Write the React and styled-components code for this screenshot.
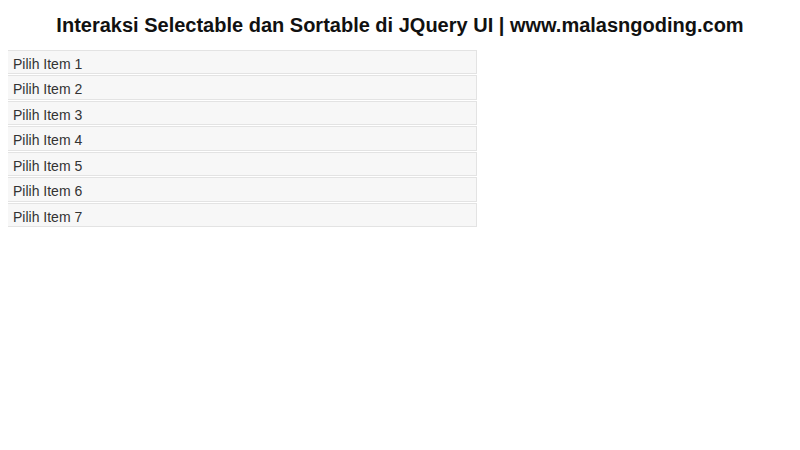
import React from "react";
import styled, { createGlobalStyle } from "styled-components";

const Global = createGlobalStyle`
  html, body { margin: 0; padding: 0; background: #fff; }
  body { margin: 8px; font-family: "Liberation Sans", Arial, sans-serif; }
`;

const Title = styled.h1`
  margin: 4.5px 0 13.5px;
  text-align: center;
  font-size: 20px;
  line-height: 24px;
  font-weight: bold;
  color: #111;
`;

const List = styled.ul`
  list-style: none;
  margin: 0 0 0 -1px;
  padding: 0;
  width: 60%;
  display: flex;
  flex-direction: column;
  gap: 1px;
`;

const Item = styled.li`
  box-sizing: border-box;
  height: 24.43px;
  padding: 5px 5px 0;
  border: 1px solid #e3e3e3;
  background: #f7f7f7;
  color: #333;
  font-size: 14px;
  line-height: 17px;
  cursor: move;
`;

const items = [1, 2, 3, 4, 5, 6, 7];

export default function App() {
  return (
    <>
      <Global />
      <Title>Interaksi Selectable dan Sortable di JQuery UI | www.malasngoding.com</Title>
      <List>
        {items.map((n) => (
          <Item key={n}>Pilih Item {n}</Item>
        ))}
      </List>
    </>
  );
}
